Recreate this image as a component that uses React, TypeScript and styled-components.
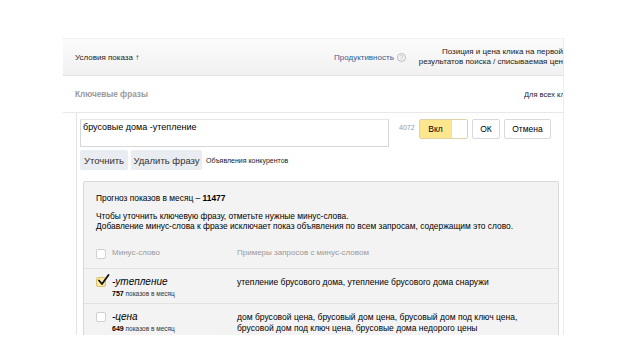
import React from "react";
import styled, { createGlobalStyle } from "styled-components";

const GlobalStyle = createGlobalStyle`
  html, body { margin: 0; padding: 0; background: #fff; }
  body { font-family: "Liberation Sans", Arial, sans-serif; color: #000; }
  * { box-sizing: border-box; }
`;

const Page = styled.div`
  width: 640px;
  height: 360px;
  padding-top: 38px;
  padding-left: 63px;
  overflow: hidden;
`;

const Card = styled.div`
  width: 501px;
  height: 297px;
  overflow: hidden;
  border-right: 1px solid #ececec;
  display: flex;
  flex-direction: column;
`;

const HeaderBar = styled.div`
  height: 38px;
  flex: none;
  display: grid;
  grid-template-columns: 259px 83px 1fr;
  align-items: center;
  padding-left: 12px;
  background: linear-gradient(#fbfbfb, #f1f1f1);
  border-top: 1px solid #efefef;
  border-bottom: 1px solid #e2e2e2;
  font-size: 8px;
`;

const SortLabel = styled.span`
  color: #222;
`;

const ProdLabel = styled.span`
  color: #3d5a8c;
  display: flex;
  align-items: center;
  gap: 3px;
  white-space: nowrap;
`;

const Help = styled.span`
  width: 9px;
  height: 9px;
  border-radius: 50%;
  border: 1px solid #bbb;
  color: #aaa;
  font-size: 6.5px;
  line-height: 7px;
  text-align: center;
`;

const PosLabel = styled.div`
  text-align: right;
  line-height: 10px;
  color: #222;
  white-space: nowrap;
  overflow: hidden;
`;

const KeyRow = styled.div`
  height: 37px;
  flex: none;
  display: flex;
  justify-content: space-between;
  align-items: center;
  padding-left: 12px;
  border-bottom: 1px solid #e8e8e8;
  font-size: 8px;
`;

const KeyTitle = styled.span`
  color: #9a9a9a;
  font-weight: bold;
  font-size: 8.2px;
`;

const AllLabel = styled.span`
  width: 39px;
  white-space: nowrap;
  overflow: hidden;
  color: #222;
  font-size: 7.5px;
`;

const EditRow = styled.div`
  margin-left: 13px;
  flex: 1;
  border-left: 1px solid #e3e3e3;
  padding: 6px 0 0 3px;
  display: flex;
  flex-direction: column;
`;

const TopLine = styled.div`
  display: flex;
  align-items: flex-start;
`;

const PhraseBox = styled.div`
  width: 309px;
  height: 28px;
  border: 1px solid #d6d6d6;
  border-top-color: #e6e6e6;
  background: #fff;
  padding: 2px 2px;
  font-size: 9px;
  line-height: 11px;
`;

const Counter = styled.span`
  margin: 5px 0 0 10px;
  font-size: 7px;
  color: #999;
  width: 20px;
`;

const Toggle = styled.div`
  display: flex;
  height: 20px;
  width: 49px;
  border: 1px solid #ddd3a8;
  border-radius: 2px;
  overflow: hidden;
`;

const ToggleOn = styled.span`
  width: 31px;
  background: #fde68d;
  font-size: 8.5px;
  display: flex;
  align-items: center;
  justify-content: center;
`;

const ToggleKnob = styled.span`
  flex: 1;
  background: #fff;
  border-left: 1px solid #ddd;
`;

const PlainButton = styled.span<{ $w: number }>`
  margin-left: 4px;
  width: ${(p) => p.$w}px;
  height: 20px;
  border: 1px solid #d9d9d9;
  border-radius: 2px;
  background: #fff;
  font-size: 8.5px;
  display: flex;
  align-items: center;
  justify-content: center;
`;

const ActionLine = styled.div`
  margin-top: 3px;
  display: flex;
  align-items: center;
  gap: 3px;
`;

const GrayButton = styled.span<{ $w: number }>`
  width: ${(p) => p.$w}px;
  height: 20px;
  background: #e9ecf0;
  border-radius: 2px;
  font-size: 9.5px;
  color: #333;
  display: flex;
  align-items: center;
  justify-content: center;
`;

const CompLink = styled.span`
  font-size: 7px;
  color: #222;
  margin-left: 1px;
`;

const Panel = styled.div`
  margin: 11px 0 0 3px;
  width: 476px;
  flex: 1;
  background: #f3f3f3;
  border: 1px solid #d9d9d9;
  border-radius: 2px;
  display: flex;
  flex-direction: column;
`;

const Intro = styled.div`
  padding: 11px 12px 0;
  font-size: 8.4px;
  line-height: 10px;
`;

const Forecast = styled.p`
  margin: 0 0 8px;
`;

const Hint = styled.p`
  margin: 0;
`;

const Spacer = styled.div`
  height: 11px;
  flex: none;
`;

const TableRow = styled.div<{ $head?: boolean }>`
  display: grid;
  grid-template-columns: 16px 125px 1fr;
  align-items: start;
  padding: ${(p) => (p.$head ? "6px 12px 9px" : "7px 12px 4px")};
  border-bottom: 1px solid #e2e2e2;
  font-size: 8px;
  line-height: 10px;
`;

const HeadCell = styled.span`
  color: #999;
`;

const Check = styled.span<{ $on?: boolean }>`
  position: relative;
  margin-top: 1px;
  width: 10px;
  height: 10px;
  border-radius: 2px;
  border: 1px solid ${(p) => (p.$on ? "#d9c26a" : "#d0d0d0")};
  background: ${(p) => (p.$on ? "#fde9a0" : "#fff")};
`;

const Tick = styled.svg`
  position: absolute;
  left: 0px;
  top: -4px;
`;

const WordCell = styled.div`
  display: flex;
  flex-direction: column;
`;

const Word = styled.span`
  font-style: italic;
  font-size: 10px;
  line-height: 12px;
`;

const Shows = styled.span`
  font-size: 6.5px;
  line-height: 11px;
  color: #333;
  b { color: #000; font-size: 7px; }
`;

const Examples = styled.span`
  padding-top: 1px;
  font-size: 8.5px;
  line-height: 11px;
`;

export default function App() {
  return (
    <>
      <GlobalStyle />
      <Page>
        <Card>
          <HeaderBar>
            <SortLabel>Условия показа ↑</SortLabel>
            <ProdLabel>
              Продуктивность <Help>?</Help>
            </ProdLabel>
            <PosLabel>
              Позиция и цена клика на первой
              <br />
              результатов поиска / списываемая цен
            </PosLabel>
          </HeaderBar>
          <KeyRow>
            <KeyTitle>Ключевые фразы</KeyTitle>
            <AllLabel>Для всех ключевых фраз</AllLabel>
          </KeyRow>
          <EditRow>
            <TopLine>
              <PhraseBox>брусовые дома -утепление</PhraseBox>
              <Counter>4072</Counter>
              <Toggle>
                <ToggleOn>Вкл</ToggleOn>
                <ToggleKnob />
              </Toggle>
              <PlainButton $w={28}>ОК</PlainButton>
              <PlainButton $w={47}>Отмена</PlainButton>
            </TopLine>
            <ActionLine>
              <GrayButton $w={48}>Уточнить</GrayButton>
              <GrayButton $w={71}>Удалить фразу</GrayButton>
              <CompLink>Объявления конкурентов</CompLink>
            </ActionLine>
            <Panel>
              <Intro>
                <Forecast>
                  Прогноз показов в месяц – <b>11477</b>
                </Forecast>
                <Hint>Чтобы уточнить ключевую фразу, отметьте нужные минус-слова.</Hint>
                <Hint>
                  Добавление минус-слова к фразе исключает показ объявления по всем запросам, содержащим это слово.
                </Hint>
              </Intro>
              <Spacer />
              <TableRow $head>
                <Check />
                <HeadCell>Минус-слово</HeadCell>
                <HeadCell>Примеры запросов с минус-словом</HeadCell>
              </TableRow>
              <TableRow>
                <Check $on>
                  <Tick width="13" height="12" viewBox="0 0 13 12">
                    <path d="M2 6.5 L5 10 L11.5 1" fill="none" stroke="#111" strokeWidth="1.8" strokeLinecap="round" strokeLinejoin="round" />
                  </Tick>
                </Check>
                <WordCell>
                  <Word>-утепление</Word>
                  <Shows>
                    <b>757</b> показов в месяц
                  </Shows>
                </WordCell>
                <Examples>утепление брусового дома, утепление брусового дома снаружи</Examples>
              </TableRow>
              <TableRow>
                <Check />
                <WordCell>
                  <Word>-цена</Word>
                  <Shows>
                    <b>649</b> показов в месяц
                  </Shows>
                </WordCell>
                <Examples>
                  дом брусовой цена, брусовый дом цена, брусовый дом под ключ цена,
                  <br />
                  брусовой дом под ключ цена, брусовые дома недорого цены
                </Examples>
              </TableRow>
            </Panel>
          </EditRow>
        </Card>
      </Page>
    </>
  );
}
